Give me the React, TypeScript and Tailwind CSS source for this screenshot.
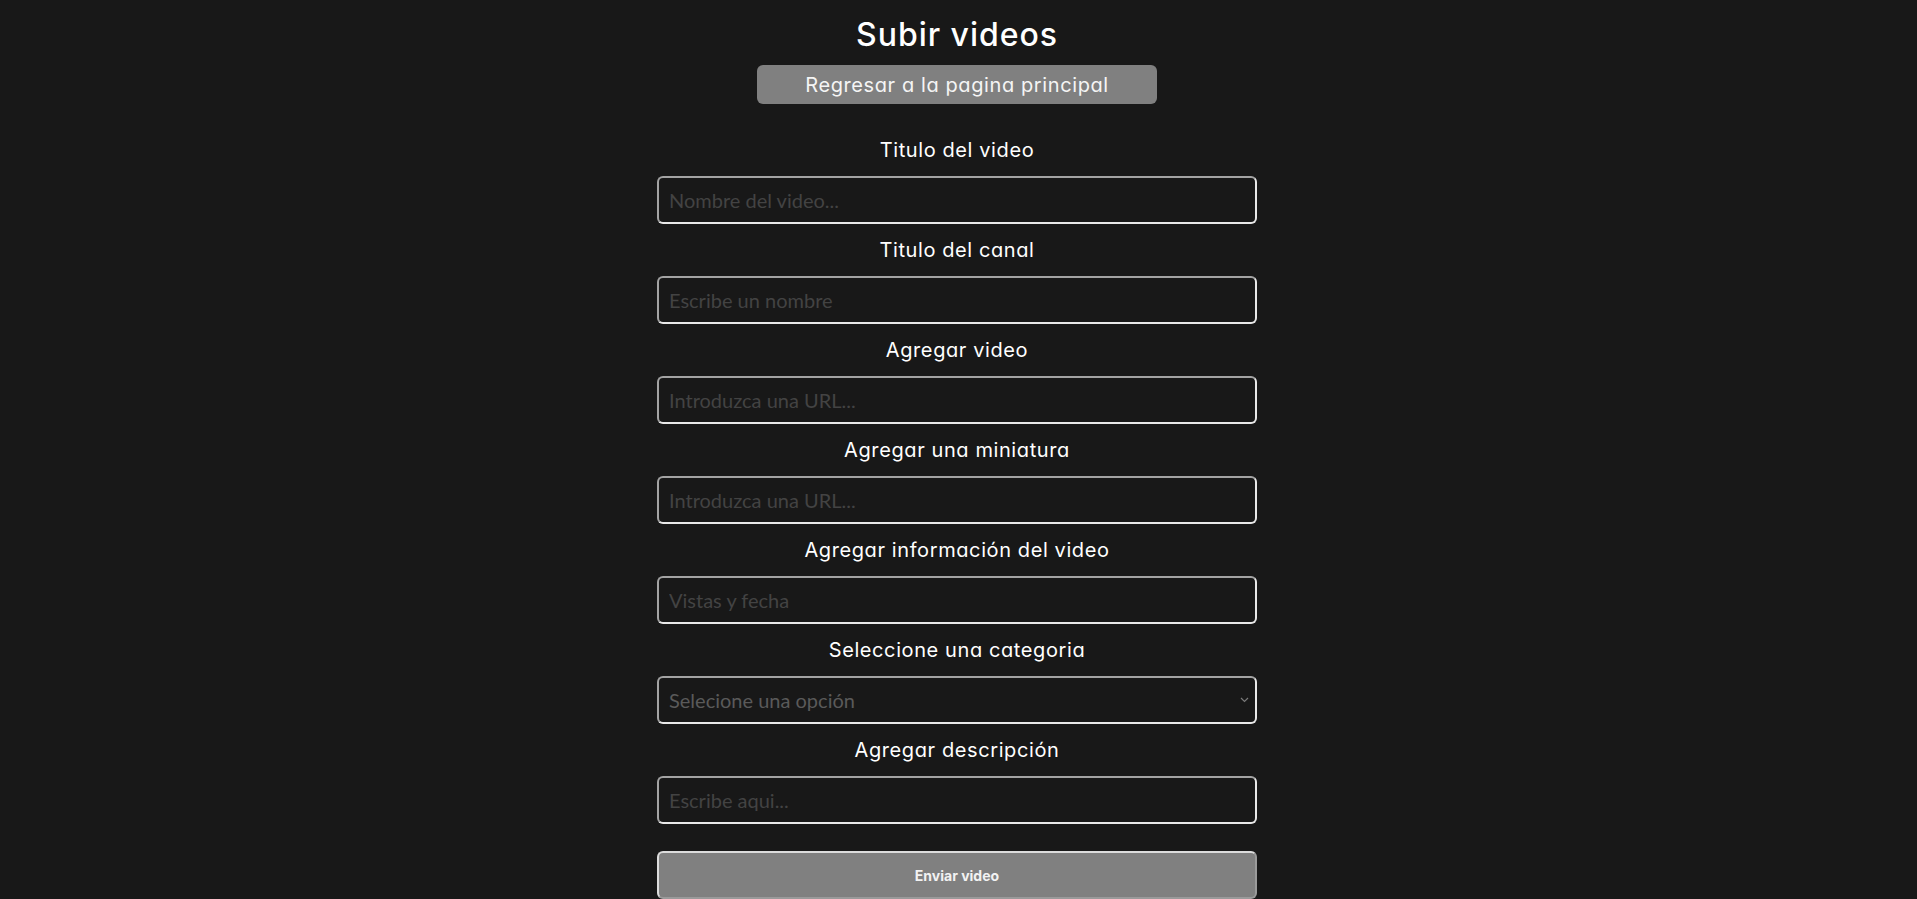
import React from "react";

const fields = [
  { label: "Titulo del video", placeholder: "Nombre del video..." },
  { label: "Titulo del canal", placeholder: "Escribe un nombre" },
  { label: "Agregar video", placeholder: "Introduzca una URL..." },
  { label: "Agregar una miniatura", placeholder: "Introduzca una URL..." },
  { label: "Agregar información del video", placeholder: "Vistas y fecha" },
];

const labelCls =
  "block h-[30px] text-center text-[20px] leading-[30px] tracking-[0.03em] text-white [font-feature-settings:'cv11']";
const boxBase =
  "block h-[48px] w-full rounded-[6px] border-2 border-t-[#a3a3a3] border-l-[#a3a3a3] border-b-[#e8e8e8] border-r-[#e8e8e8] bg-[#181818] pl-[10px] pr-3 text-[20px] outline-none font-['Lato',sans-serif]";
const inputCls = `${boxBase} text-[#dddddd] placeholder:text-[#434343]`;
const selectCls = `${boxBase} appearance-none text-[#5a5a5a]`;

export default function App() {
  return (
    <div className="min-h-screen bg-[#181818] font-['Inter',sans-serif] antialiased">
      <div className="flex flex-col items-center pt-[15px] pr-[3px]">
        <h1 className="text-[32px] leading-[40px] font-medium tracking-[0.03em] text-white [font-feature-settings:'cv11']">
          Subir videos
        </h1>
        <button className="mt-[10px] h-[39px] w-[400px] rounded-[6px] bg-[#808080] text-[20px] tracking-[0.03em] text-[#f5f5f5] [font-feature-settings:'cv11']">
          Regresar a la pagina principal
        </button>

        <form className="mt-[31px] flex w-[600px] flex-col gap-[11px]">
          {fields.map((f) => (
            <React.Fragment key={f.label}>
              <label className={labelCls}>{f.label}</label>
              <input type="text" placeholder={f.placeholder} className={inputCls} />
            </React.Fragment>
          ))}

          <label className={labelCls}>Seleccione una categoria</label>
          <div className="relative">
            <select defaultValue="" className={selectCls}>
              <option value="" disabled>
                Selecione una opción
              </option>
            </select>
            <svg
              className="pointer-events-none absolute right-[8px] top-[21px]"
              width="9"
              height="6"
              viewBox="0 0 9 6"
              fill="none"
            >
              <path d="M1 1l3.5 3.5L8 1" stroke="#7a7a7a" strokeWidth="1.2" />
            </svg>
          </div>

          <label className={labelCls}>Agregar descripción</label>
          <input type="text" placeholder="Escribe aqui..." className={inputCls} />

          <button
            type="button"
            className="mt-[16px] h-[48px] w-full rounded-[6px] border-2 border-t-[#dcdcdc] border-l-[#dcdcdc] border-b-[#9a9a9a] border-r-[#9a9a9a] bg-[#808080] text-[14px] font-bold text-[#f2f2f2]"
          >
            Enviar video
          </button>
        </form>
      </div>
    </div>
  );
}
